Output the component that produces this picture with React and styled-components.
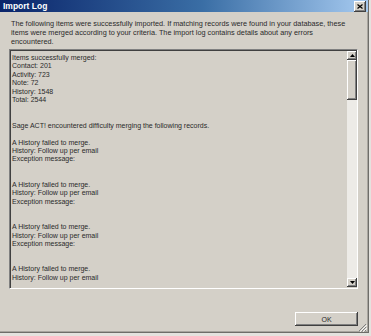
import React from 'react';
import styled, { createGlobalStyle } from 'styled-components';

const GlobalStyle = createGlobalStyle`
  html, body {
    margin: 0;
    padding: 0;
    background: #ecebe8;
  }
  body {
    font-family: 'Liberation Sans', Arial, sans-serif;
  }
`;

const Screen = styled.div`
  width: 371px;
  height: 336px;
  overflow: hidden;
  background: #e4e2de;
`;

const Window = styled.div`
  width: 368px;
  height: 332px;
  display: flex;
  flex-direction: column;
  background: #d4d0c8;
  border-right: 1px solid #6e6d69;
  border-bottom: 1px solid #6e6d69;
  box-shadow: inset -1px -1px 0 #a8a59f;
`;

const TitleBar = styled.div`
  height: 16px;
  display: flex;
  align-items: center;
  justify-content: space-between;
  padding: 0 2px 0 3px;
  background: linear-gradient(to right, #0a246a 0%, #3a6ea5 55%, #a6caf0 100%);
`;

const Title = styled.span`
  color: #fff;
  font-weight: 700;
  font-size: 8.5px;
`;

const CloseButton = styled.div`
  width: 12px;
  height: 11px;
  display: flex;
  align-items: center;
  justify-content: center;
  background: #d4d0c8;
  box-shadow: inset -1px -1px 0 #404040, inset 1px 1px 0 #fff, inset -2px -2px 0 #808080;
`;

const Body = styled.div`
  flex: 1;
  display: flex;
  flex-direction: column;
  padding: 7px 10px 0 9px;
`;

const Description = styled.div`
  color: #2a2a2a;
  font-size: 7.3px;
  line-height: 9px;
  padding-left: 2px;
  white-space: nowrap;
`;

const LogBox = styled.div`
  margin-top: 3px;
  height: 238px;
  display: flex;
  border-top: 1px solid #808080;
  border-left: 1px solid #808080;
  border-right: 1px solid #fff;
  border-bottom: 1px solid #fff;
  box-shadow: inset 1px 1px 0 #404040;
`;

const LogText = styled.div`
  flex: 1;
  padding: 4px 0 0 2px;
  color: #2a2a2a;
  font-size: 7px;
  line-height: 8.45px;
  white-space: pre;
  overflow: hidden;
`;

const ScrollBar = styled.div`
  width: 10px;
  display: flex;
  flex-direction: column;
  padding: 1px 0;
`;

const ArrowButton = styled.div`
  height: 9px;
  display: flex;
  align-items: center;
  justify-content: center;
  background: #d4d0c8;
  box-shadow: inset -1px -1px 0 #404040, inset 1px 1px 0 #fff, inset -2px -2px 0 #808080;
`;

const Thumb = styled.div`
  height: 40px;
  background: #d4d0c8;
  box-shadow: inset -1px -1px 0 #404040, inset 1px 1px 0 #fff, inset -2px -2px 0 #808080;
`;

const Track = styled.div`
  flex: 1;
  background: #edebe7;
`;

const Footer = styled.div`
  display: flex;
  justify-content: flex-end;
  margin-top: 23px;
`;

const OkButton = styled.button`
  width: 63px;
  height: 14px;
  padding: 0;
  border: none;
  background: #d4d0c8;
  color: #2a2a2a;
  font-family: 'Liberation Sans', Arial, sans-serif;
  font-size: 7px;
  box-shadow: inset -1px -1px 0 #404040, inset 1px 1px 0 #fff, inset -2px -2px 0 #808080;
`;

const GripRow = styled.div`
  display: flex;
  justify-content: flex-end;
  padding-right: 1px;
  margin-top: -3px;
`;

const Arrow = ({ up }) => (
  <svg width="5" height="3" viewBox="0 0 5 3">
    <path d={up ? 'M2.5 0 L5 3 L0 3 Z' : 'M0 0 L5 0 L2.5 3 Z'} fill="#000" />
  </svg>
);

const log = `Items successfully merged:
Contact: 201
Activity: 723
Note: 72
History: 1548
Total: 2544


Sage ACT! encountered difficulty merging the following records.

A History failed to merge.
History: Follow up per email
Exception message:


A History failed to merge.
History: Follow up per email
Exception message:


A History failed to merge.
History: Follow up per email
Exception message:


A History failed to merge.
History: Follow up per email`;

export default function App() {
  return (
    <Screen>
      <GlobalStyle />
      <Window>
        <TitleBar>
          <Title>Import Log</Title>
          <CloseButton>
            <svg width="6" height="5" viewBox="0 0 6 5">
              <path d="M0.5 0.5 L5.5 4.5 M5.5 0.5 L0.5 4.5" stroke="#000" strokeWidth="1.2" />
            </svg>
          </CloseButton>
        </TitleBar>
        <Body>
          <Description>
            <div>The following items were successfully imported. If matching records were found in your database, these</div>
            <div>items were merged according to your criteria. The import log contains details about any errors</div>
            <div>encountered.</div>
          </Description>
          <LogBox>
            <LogText>{log}</LogText>
            <ScrollBar>
              <ArrowButton><Arrow up /></ArrowButton>
              <Thumb />
              <Track />
              <ArrowButton><Arrow /></ArrowButton>
            </ScrollBar>
          </LogBox>
          <Footer>
            <OkButton>OK</OkButton>
          </Footer>
        </Body>
        <GripRow>
          <svg width="9" height="9" viewBox="0 0 9 9">
            <path d="M8 1 L1 8 M8 4 L4 8 M8 7 L7 8" stroke="#808080" strokeWidth="1" />
            <path d="M9 2 L2 9 M9 5 L5 9" stroke="#fff" strokeWidth="0.8" />
          </svg>
        </GripRow>
      </Window>
    </Screen>
  );
}
